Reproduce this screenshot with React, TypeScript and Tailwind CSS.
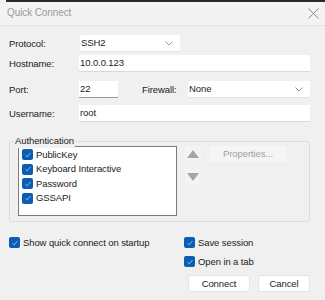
import React from "react";

function Check({ label, className = "" }: { label: string; className?: string }) {
  return (
    <div className={`flex items-center whitespace-nowrap ${className}`}>
      <div className="w-[11px] h-[11px] shrink-0 rounded-[2px] bg-[#0a5fb5] flex items-center justify-center">
        <svg width="8" height="8" viewBox="0 0 8 8">
          <path d="M1.5 4.2 L3.2 5.8 L6.5 2" stroke="#9cc2ea" strokeWidth="0.9" fill="none" />
        </svg>
      </div>
      <span className="ml-[3px]">{label}</span>
    </div>
  );
}

function Chevron() {
  return (
    <svg width="8" height="5" viewBox="0 0 8 5">
      <path d="M0.5 0.5 L4 4 L7.5 0.5" stroke="#8a8a8a" strokeWidth="0.9" fill="none" />
    </svg>
  );
}

export default function App() {
  return (
    <div
      className="w-[325px] h-[300px] bg-[#f0f0f0] text-[9.5px] leading-[12px] tracking-[-0.1px] text-[#1b1b1b] overflow-hidden relative"
      style={{ fontFamily: '"Liberation Sans", Arial, sans-serif' }}
    >
      <div className="h-[2px] bg-[#2a2a2a] ml-[6px]" />
      <div className="h-[24px] bg-[#f3f3f3] border-b border-[#e2e2e2] flex items-center justify-between pl-[7px] pr-[5px] rounded-tl-[6px]">
        <span className="text-[#9a9a9a] text-[10px] -mt-[1px]">Quick Connect</span>
        <svg width="11" height="11" viewBox="0 0 11 11" className="mr-[1px]">
          <path d="M0.5 0.5 L10.5 10.5 M10.5 0.5 L0.5 10.5" stroke="#8c8c8c" strokeWidth="1" />
        </svg>
      </div>

      <div className="px-[9px] pt-[9px]">
        <div className="flex items-center h-[17px]">
          <span className="w-[71px]">Protocol:</span>
          <div className="w-[100px] h-[17px] bg-white rounded-[2px] flex items-center justify-between pl-[1px] pr-[7px] border-b border-[#e4e4e4]">
            <span>SSH2</span>
            <Chevron />
          </div>
        </div>

        <div className="flex items-center h-[17px] mt-[3px]">
          <span className="w-[70px]">Hostname:</span>
          <div className="flex-1 h-[17px] bg-white border-b border-[#d9d9d9] pl-[1px] mr-[6px] flex items-center">
            10.0.0.123
          </div>
        </div>

        <div className="flex items-center h-[17px] mt-[9px]">
          <span className="w-[70px]">Port:</span>
          <div className="w-[39px] h-[17px] bg-white border-b border-[#9a9a9a] pl-[1px] flex items-center">22</div>
          <span className="ml-[24px] w-[46px]">Firewall:</span>
          <div className="flex-1 h-[17px] bg-white rounded-[2px] mr-[6px] flex items-center justify-between pl-[1px] pr-[7px] border-b border-[#e4e4e4]">
            <span>None</span>
            <Chevron />
          </div>
        </div>

        <div className="flex items-center h-[17px] mt-[7px]">
          <span className="w-[70px]">Username:</span>
          <div className="flex-1 h-[17px] bg-white border-b border-[#d9d9d9] pl-[1px] mr-[6px] flex items-center">
            root
          </div>
        </div>

        <div className="relative mt-[19px] mr-[6px] h-[81px] border border-[#dcdcdc] rounded-[3px]">
          <span className="absolute -top-[8px] left-[4px] bg-[#f0f0f0] px-[1px] leading-[14px]">
            Authentication
          </span>
          <div className="flex pt-[4px] pl-[8px]">
            <div className="w-[159px] h-[70px] bg-white border border-[#7a7a7a] pt-[0.5px] pl-[3px] flex flex-col">
              <Check label="PublicKey" className="h-[14.5px]" />
              <Check label="Keyboard Interactive" className="h-[14.5px]" />
              <Check label="Password" className="h-[14.5px]" />
              <Check label="GSSAPI" className="h-[14.5px]" />
            </div>
            <div className="flex flex-col ml-[8px] gap-[8px]">
              <div className="w-[16px] h-[15px] bg-[#f4f4f4] rounded-[2px] flex items-center justify-center">
                <svg width="12" height="8" viewBox="0 0 12 8"><path d="M6 0 L12 8 L0 8 Z" fill="#a6a6a6" /></svg>
              </div>
              <div className="w-[16px] h-[15px] bg-[#f4f4f4] rounded-[2px] flex items-center justify-center">
                <svg width="12" height="8" viewBox="0 0 12 8"><path d="M0 0 L12 0 L6 8 Z" fill="#a6a6a6" /></svg>
              </div>
            </div>
            <div className="ml-[8px] w-[78px] h-[16px] bg-[#f5f5f5] rounded-[2px] flex items-center justify-center text-[#a0a0a0]">
              Properties...
            </div>
          </div>
        </div>

        <div className="flex mt-[14px]">
          <Check label="Show quick connect on startup" className="w-[175px] h-[13px]" />
          <div className="flex flex-col gap-[6px]">
            <Check label="Save session" className="h-[13px]" />
            <Check label="Open in a tab" className="h-[13px]" />
          </div>
        </div>

        <div className="flex justify-end gap-[8px] mt-[7px] mr-[6px]">
          <div className="w-[62px] h-[17px] bg-white rounded-[2px] border border-[#e4e4e4] flex items-center justify-center">Connect</div>
          <div className="w-[52px] h-[17px] bg-white rounded-[2px] border border-[#e4e4e4] flex items-center justify-center">Cancel</div>
        </div>
      </div>
    </div>
  );
}
